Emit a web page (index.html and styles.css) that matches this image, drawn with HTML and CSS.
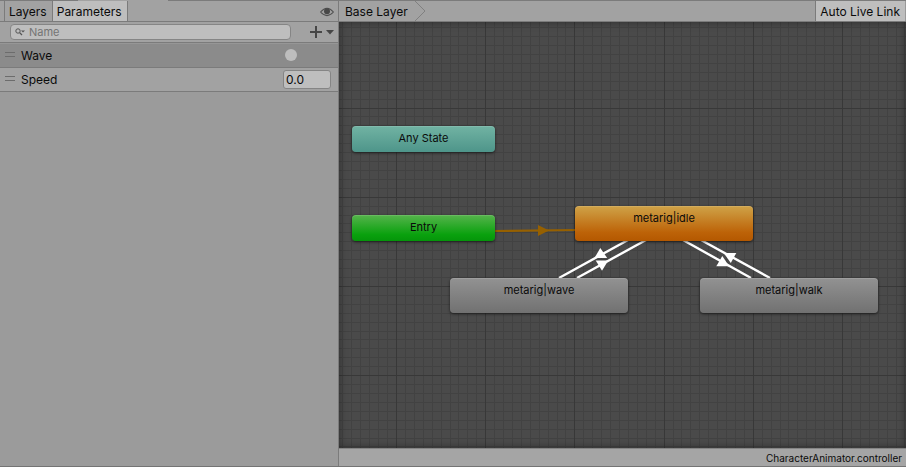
FILE: index.html
```html
<!DOCTYPE html>
<html lang="en">
<head>
<meta charset="utf-8">
<title>Animator</title>
<link rel="stylesheet" href="styles.css">
</head>
<body>
<div class="window">
  <aside class="sidebar">
    <div class="toolbar">
      <button class="tab">Layers</button>
      <button class="tab tab-active">Parameters</button>
      <button class="icon-button eye" aria-label="Toggle visibility">
        <svg width="14" height="10" viewBox="0 0 14 10"><path d="M.6 5Q7-2.6 13.4 5Q7 12.2.6 5Z" fill="none" stroke="#505050" stroke-width="1.1"/><circle cx="7" cy="4.2" r="3" fill="#484848"/></svg>
      </button>
    </div>
    <div class="search-row">
      <label class="search">
        <svg width="10" height="8" viewBox="0 0 10 8"><circle cx="3" cy="3" r="2.2" fill="none" stroke="#555" stroke-width="1"/><path d="M4.6 4.6L7 7" stroke="#555" stroke-width="1.3"/><path d="M6 2.5h4L8 4.5z" fill="#555"/></svg>
        <input type="text" placeholder="Name" aria-label="Search parameters">
      </label>
      <button class="icon-button add" aria-label="Add parameter">
        <svg width="24" height="12" viewBox="0 0 24 12"><path d="M0 6h12M6 0v12" stroke="#464646" stroke-width="2"/><path d="M16 4h8l-4 4.5z" fill="#464646"/></svg>
      </button>
    </div>
    <div class="parameter parameter-selected">
      <span class="grip"></span>
      <label for="wave">Wave</label>
      <input type="radio" id="wave" class="trigger">
    </div>
    <div class="parameter">
      <span class="grip"></span>
      <label for="speed">Speed</label>
      <input type="text" id="speed" class="number" value="0.0">
    </div>
  </aside>
  <main class="editor">
    <div class="toolbar">
      <a class="crumb" href="#">Base Layer</a>
      <svg class="crumb-end" width="12" height="20" viewBox="0 0 12 20"><path d="M1 0L11 10L1 20" fill="none" stroke="#808080"/></svg>
      <button class="live-link">Auto Live Link</button>
    </div>
    <div class="graph">
      <svg class="graph-layer" width="100%" height="100%">
        <g id="grid"></g>
        <path d="M155 209L237 208" stroke="#966000" stroke-width="2.2"/>
        <path d="M199 203V214L210 208.500Z" fill="#966000"/>
        <path d="M220 256L289 218M238 256L307 218M344 218L412 256M362 218L431 256" stroke="#fff" stroke-width="2.4"/>
        <g fill="#fff">
          <path d="M261.300 226L268.200 236H255.500Z"/>
          <path d="M256.700 238.500H269.200L263 248.700Z"/>
          <path d="M384.700 231H397.300L391.800 241Z"/>
          <path d="M383.300 234L390.200 244.300H377.300Z"/>
        </g>
      </svg>
      <div class="node node-small any-state">Any State</div>
      <div class="node node-small entry">Entry</div>
      <div class="node idle">metarig|idle</div>
      <div class="node wave">metarig|wave</div>
      <div class="node walk">metarig|walk</div>
      <div class="vignette"></div>
    </div>
    <footer class="status">CharacterAnimator.controller</footer>
  </main>
</div>
<script src="grid.js"></script>
</body>
</html>
```
FILE: styles.css
```css
* { box-sizing: border-box; }

body {
  margin: 0;
  font: 12px/16px Inter, "Liberation Sans", sans-serif;
  color: #0a0a0a;
  background: #9b9b9b;
}

button, input { font: inherit; color: inherit; margin: 0; }
button { padding: 0; border: 0; background: none; }

/* The top padding shows the window edge, open under the dock tab. */
.window {
  display: grid;
  grid-template-columns: 339px 1fr;
  height: 100vh;
  padding-top: 1px;
  background: linear-gradient(to right, #7b7b7b 78px, #a2a2a2 78px 168px, #7b7b7b 168px);
  border-bottom: 1px solid #747474;
}

.sidebar { border-right: 1px solid #7b7b7b; background: #9b9b9b; }

.toolbar {
  display: flex;
  align-items: stretch;
  height: 21px;
  background: #a2a2a2;
  border-bottom: 1px solid #7b7b7b;
}

.sidebar .toolbar { padding-left: 4px; }

.tab {
  padding: 2px 5px 0 4px;
  border-left: 1px solid #7b7b7b;
}

.tab-active { background: #bebebe; border-right: 1px solid #7b7b7b; }

.icon-button { display: flex; align-items: center; margin-left: auto; }
.eye { padding-top: 2px; margin-right: 4px; }

.search-row {
  display: flex;
  align-items: center;
  height: 21px;
  padding: 0 4px 0 10px;
  background: #a2a2a2;
  border-bottom: 1px solid #7b7b7b;
}

.search {
  display: flex;
  align-items: center;
  gap: 4px;
  width: 281px;
  height: 16px;
  padding: 0 4px;
  background: #bebebe;
  border: 1px solid #858585;
  border-radius: 4px;
}

.search input {
  flex: 1;
  min-width: 0;
  height: 14px;
  padding: 0;
  border: 0;
  background: none;
  font-size: 11px;
  outline: 0;
}

.search input::placeholder { color: #747474; opacity: 1; }

.parameter {
  display: flex;
  align-items: center;
  height: 24px;
  padding: 0 7px 0 5px;
  background: #a2a2a2;
  border-bottom: 1px solid #7b7b7b;
}

.parameter-selected { height: 25px; background: #8b8b8b; border-top: 1px solid #969696; }

.grip {
  width: 10px;
  height: 5px;
  margin: 0 6px 3px 0;
  border: solid #6c6c6c;
  border-width: 1px 0;
}

.trigger {
  appearance: none;
  width: 12px;
  height: 12px;
  margin: 0 34px 2px auto;
  border-radius: 50%;
  background: #bebebe;
}

.number {
  width: 48px;
  height: 19px;
  margin-left: auto;
  padding: 0 2px;
  border: 1px solid #858585;
  border-radius: 3px;
  background: #bebebe;
}

.editor { display: flex; flex-direction: column; min-width: 0; }

.crumb { padding: 3px 6px 0; color: inherit; text-decoration: none; }

.live-link {
  margin-left: auto;
  padding: 2px 5px 0 4px;
  background: #bebebe;
  border-left: 1px solid #7b7b7b;
  border-right: 1px solid #999;
}

.graph {
  position: relative;
  flex: 1;
  overflow: hidden;
  background: #4a4a4a;
}

.graph-layer { position: absolute; inset: 0; }
.minor { fill: #424242; }
.major { fill: #383838; }

.vignette {
  position: absolute;
  inset: 0;
  box-shadow: inset 0 0 8px rgba(0, 0, 0, 0.4);
  pointer-events: none;
}

.node {
  position: absolute;
  width: 178px;
  height: 35px;
  padding-top: 4px;
  border-radius: 4px;
  font-size: 11px;
  text-align: center;
  background: linear-gradient(#929292, #717171);
  box-shadow: inset 0 1px rgba(255, 255, 255, 0.12), 0 1px 3px rgba(0, 0, 0, 0.6);
}

.node-small { width: 143px; height: 26px; }

.any-state { left: 13px; top: 104px; background: linear-gradient(#71b3a3, #4e958a); }
.entry { left: 13px; top: 193px; background: linear-gradient(#56b44c, #0aa10e 75%, #05950a); }
.idle { left: 236px; top: 184px; background: linear-gradient(#cfa348, #bd6308 75%, #b45800); }
.wave { left: 111px; top: 256px; }
.walk { left: 361px; top: 256px; }

.status {
  height: 18px;
  padding: 1px 4px 0;
  border-top: 1px solid #858585;
  background: #a5a5a5;
  font-size: 10px;
  line-height: 16px;
  text-align: right;
}
```
FILE: grid.js
```js
// Draw the graph paper: a heavier line closes every tenth cell.
const grid = document.getElementById("grid");
const step = 8.92;

function line(kind, attributes) {
  const rect = document.createElementNS("http://www.w3.org/2000/svg", "rect");
  rect.setAttribute("class", kind);
  for (const name in attributes) rect.setAttribute(name, attributes[name]);
  grid.append(rect);
}

function draw(kind) {
  const { clientWidth, clientHeight } = document.querySelector(".graph");
  for (let i = -10; i * step < Math.max(clientWidth, clientHeight); i++) {
    if ((i % 10 === 0) !== (kind === "major")) continue;
    line(kind, { x: Math.round(57 + i * step), y: 0, width: 1, height: "100%" });
    line(kind, { x: 0, y: Math.floor(86 + i * step), width: "100%", height: 1 });
  }
}

draw("minor");
draw("major");
```
